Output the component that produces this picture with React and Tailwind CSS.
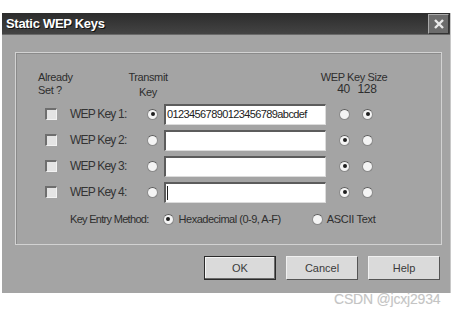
const FONT = { fontFamily: '"Liberation Sans", Arial, sans-serif' };

function Check() {
  return (
    <div className="w-[12px] h-[12px] bg-[#e4e4e4] border-t-2 border-l-2 border-t-[#6e6e6e] border-l-[#6e6e6e] border-b border-r border-b-[#f2f2f2] border-r-[#f2f2f2] shrink-0" />
  );
}

function Radio({ on }) {
  return (
    <div className="w-[11px] h-[11px] rounded-full bg-[#f4f4f4] border border-[#8a8a8a] border-t-[#5a5a5a] flex items-center justify-center shrink-0">
      {on && <div className="w-[4px] h-[4px] rounded-full bg-[#1e1e1e]" />}
    </div>
  );
}

function Btn({ children, def }) {
  return (
    <div
      className={`w-[72px] h-[24px] flex items-center justify-center text-[11px] text-[#3a3a3a] bg-[#dadada] border ${
        def ? 'border-[#2a2a2a] shadow-[inset_-1px_-1px_0_#6a6a6a,inset_1px_1px_0_#f5f5f5]' : 'border-[#f0f0f0] border-r-[#555] border-b-[#555]'
      }`}
    >
      {children}
    </div>
  );
}

const ROWS = [
  { n: 1, tx: true, val: '01234567890123456789abcdef', s40: false },
  { n: 2, tx: false, val: '', s40: true },
  { n: 3, tx: false, val: '', s40: true },
  { n: 4, tx: false, val: '', s40: true, caret: true },
];

export default function App() {
  return (
    <div className="w-[460px] h-[314px] bg-white relative overflow-hidden" style={FONT}>
      <div className="ml-[2px] pt-[13px]">
        <div className="w-[449px] h-[280px] bg-[#a4a4a4] flex flex-col border-r border-[#c8c8c8]">
          {/* title bar */}
          <div className="h-[22px] bg-gradient-to-b from-[#2c2c2c] to-[#444] border-b border-[#6a6a6a] flex items-center justify-between pl-[4px] pr-[1px]">
            <span className="text-white font-bold text-[13px] tracking-[-0.3px] [text-shadow:1px_1px_0_#111]">Static WEP Keys</span>
            <div className="w-[21px] h-[20px] bg-[#6c6c6c] border border-[#aaa] border-r-[#333] border-b-[#333] flex items-center justify-center">
              <svg width="12" height="12" viewBox="0 0 12 12">
                <path d="M2 2 L10 10 M10 2 L2 10" stroke="#eaeaea" strokeWidth="2.4" />
              </svg>
            </div>
          </div>

          {/* group box */}
          <div className="ml-[13px] mt-[17px] w-[427px] h-[193px] border border-[#d2d2d2] shadow-[inset_1px_1px_0_#8a8a8a] text-[11px] text-[#2e2e2e] tracking-[-0.4px]">
            {/* headers */}
            <div className="flex mt-[18px] h-[30px] leading-[13px]">
              <div className="ml-[22px] w-[40px] text-left">Already<br />Set ?</div>
              <div className="ml-[48px] w-[44px] text-center">Transmit<br /><span className="leading-[17px]">Key</span></div>
              <div className="ml-[149px] w-[70px] flex flex-col items-center leading-[12px]">
                <span>WEP Key Size</span>
                <div className="flex text-[12px] w-[70px]">
                  <span className="ml-[18px] w-[13px] text-center">40</span>
                  <span className="ml-[7px] w-[20px] text-center">128</span>
                </div>
              </div>
            </div>

            {/* key rows */}
            <div className="flex flex-col">
              {ROWS.map((r) => (
                <div key={r.n} className="flex items-center h-[26px]">
                  <div className="ml-[29px]"><Check /></div>
                  <div className="ml-[13px] w-[77px] text-[12px] tracking-[-0.8px] text-[#333]">WEP Key {r.n}:</div>
                  <Radio on={r.tx} />
                  <div className="ml-[6px] w-[162px] h-[21px] bg-white border-t-2 border-l-2 border-t-[#5c5c5c] border-l-[#5c5c5c] border-b border-r border-b-[#dcdcdc] border-r-[#dcdcdc] flex items-center px-[1px] text-[11px] text-[#222] tracking-[-0.6px]">
                    {r.val}
                    {r.caret && <div className="w-[1px] h-[14px] bg-[#222]" />}
                  </div>
                  <div className="ml-[13px]"><Radio on={r.s40} /></div>
                  <div className="ml-[12px]"><Radio on={!r.s40} /></div>
                </div>
              ))}
            </div>

            {/* key entry method */}
            <div className="flex items-center mt-[7px] h-[14px]">
              <span className="ml-[54px] tracking-[-0.7px]">Key Entry Method:</span>
              <div className="ml-[14px]"><Radio on /></div>
              <span className="ml-[5px] tracking-[-0.5px]">Hexadecimal (0-9, A-F)</span>
              <div className="ml-[31px]"><Radio /></div>
              <span className="ml-[4px] tracking-[-0.3px]">ASCII Text</span>
            </div>
          </div>

          {/* buttons */}
          <div className="flex justify-end gap-[10px] mr-[10px] mt-[11px]">
            <Btn def>OK</Btn>
            <Btn>Cancel</Btn>
            <Btn>Help</Btn>
          </div>
        </div>
      </div>
      <div className="absolute left-[334px] top-[289px] text-[14px] text-[#c4c4c4] tracking-[-0.2px] [text-shadow:0_0_1px_#eee]">CSDN @jcxj2934</div>
    </div>
  );
}
